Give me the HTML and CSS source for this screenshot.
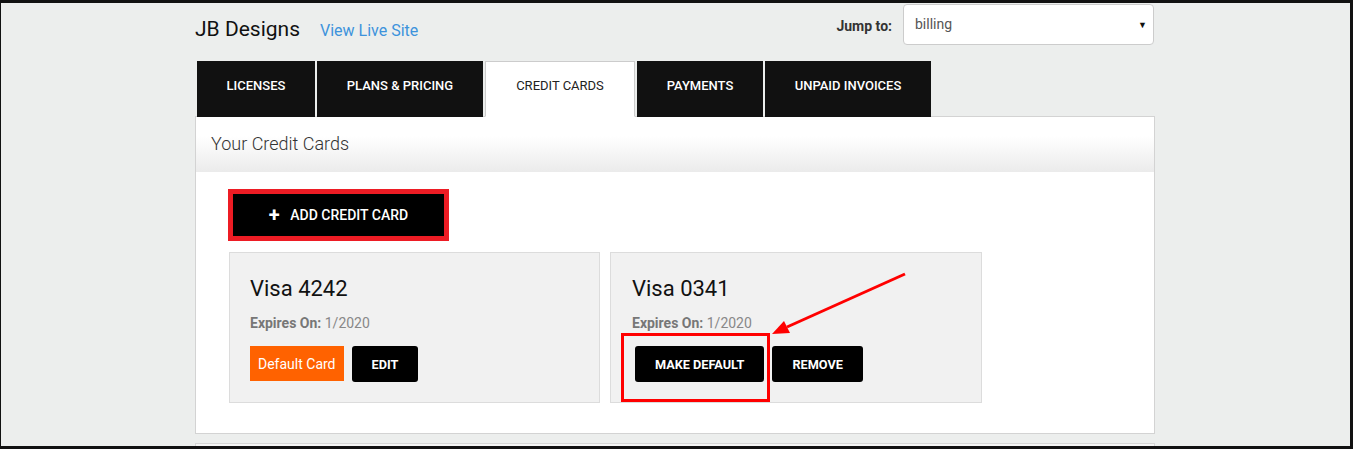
FILE: index.html
```html
<!DOCTYPE html>
<html lang="en">
  <head>
    <meta charset="UTF-8" />
    <meta name="viewport" content="width=device-width, initial-scale=1.0" />
    <title>Billing - Credit Cards</title>
    <link rel="stylesheet" href="styles.css">
  </head>
  <body>
    <div class="container">
      <!-- top bar -->
      <div class="topbar">
        <div class="site">
          <h1>JB Designs</h1>
          <a href="#" class="live-link">View Live Site</a>
        </div>
        <div class="jump">
          <label>Jump to:</label>
          <div class="select">
            <span>billing</span>
            <span class="caret">&#9660;</span>
          </div>
        </div>
      </div>

      <!-- tabs -->
      <div class="tabs">
        <a href="#" class="tab tab-licenses">LICENSES</a>
        <a href="#" class="tab tab-plans">PLANS &amp; PRICING</a>
        <a href="#" class="tab tab-cards active">CREDIT CARDS</a>
        <a href="#" class="tab tab-payments">PAYMENTS</a>
        <a href="#" class="tab tab-invoices">UNPAID INVOICES</a>
      </div>

      <!-- credit cards panel -->
      <div class="panel">
        <div class="panel-header">Your Credit Cards</div>
        <div class="panel-body">
          <div class="highlight">
            <button class="btn-add"><span class="plus">+</span> ADD CREDIT CARD</button>
          </div>

          <div class="cards">
            <div class="card">
              <h2>Visa 4242</h2>
              <p class="expires"><b>Expires On:</b> 1/2020</p>
              <div class="actions">
                <span class="badge-default">Default Card</span>
                <button class="btn">EDIT</button>
              </div>
            </div>

            <div class="card">
              <h2>Visa 0341</h2>
              <p class="expires"><b>Expires On:</b> 1/2020</p>
              <div class="actions shifted">
                <button class="btn">MAKE DEFAULT</button>
                <button class="btn">REMOVE</button>
              </div>
              <!-- annotation box -->
              <div class="mark"></div>
            </div>

            <!-- annotation arrow -->
            <svg class="arrow" width="760" height="160" viewBox="0 0 760 160">
              <line x1="676" y1="22" x2="558" y2="75" stroke="#f00" stroke-width="3" />
              <polygon points="543,82 561,81 555,69" fill="#f00" />
            </svg>
          </div>
        </div>
      </div>

      <div class="panel-next"></div>
    </div>
  </body>
</html>
```

FILE: styles.css
```css
/* reset */
* {
  margin: 0;
  padding: 0;
  box-sizing: border-box;
}

body {
  font-family: Roboto, "Liberation Sans", sans-serif;
  background-color: #eceeed;
  color: #222;
  height: 449px;
  overflow: hidden;
  border-style: solid;
  border-color: #111;
  border-width: 3px 3px 3px 1px;
}

.container {
  width: 960px;
  margin-left: 194px;
}

/* top bar */
.topbar {
  display: flex;
  justify-content: space-between;
  height: 58px;
}

.site {
  display: flex;
  align-items: baseline;
  gap: 20px;
  padding-top: 14px;
}

.site h1 {
  font-size: 21px;
  font-weight: 400;
  line-height: 24px;
  color: #111;
}

.live-link {
  font-size: 16px;
  color: #3d93dc;
  text-decoration: none;
}

.jump {
  display: flex;
  align-items: center;
  gap: 11px;
  height: 41px;
  margin-top: 1px;
  margin-right: 1px;
}

.jump label {
  font-size: 14px;
  font-weight: 700;
  color: #333;
  padding-top: 2px;
}

.select {
  width: 251px;
  height: 41px;
  background: #fff;
  border: 1px solid #ccc;
  border-radius: 4px;
  display: flex;
  justify-content: space-between;
  align-items: center;
  padding: 0 6px 2px 11px;
  font-size: 14px;
  color: #555;
}

.caret {
  font-size: 9px;
  color: #111;
  padding-top: 3px;
}

/* tabs */
.tabs {
  display: flex;
  gap: 2px;
  padding-left: 2px;
  height: 56px;
  margin-bottom: -1px;
  position: relative;
}

.tab {
  display: flex;
  align-items: center;
  justify-content: center;
  padding-bottom: 7px;
  background: #111;
  color: #fff;
  font-size: 13px;
  font-weight: 500;
  text-decoration: none;
}

.tab-licenses { width: 118px; }
.tab-plans { width: 166px; }
.tab-cards { width: 150px; }
.tab-payments { width: 126px; }
.tab-invoices { width: 166px; }

.tab.active {
  background: #fff;
  color: #222;
  font-weight: 400;
  border: 1px solid #ccc;
  border-bottom-color: #fff;
}

/* panel */
.panel {
  background: #fff;
  border: 1px solid #d3d3d3;
  height: 318px;
}

.panel-header {
  height: 55px;
  display: flex;
  align-items: center;
  padding: 0 15px 2px;
  font-size: 18px;
  font-weight: 300;
  color: #333;
  background: linear-gradient(#fff 35%, #ebebeb);
}

.panel-body {
  padding: 17px 33px 0;
}

.highlight {
  display: inline-block;
  margin-left: -1px;
  border: 5px solid #ed1c24;
}

.btn-add {
  display: block;
  width: 211px;
  height: 42px;
  background: #000;
  color: #fff;
  border: none;
  font-family: inherit;
  font-size: 14px;
  font-weight: 500;
}

.btn-add .plus {
  font-size: 20px;
  font-weight: 700;
  margin-right: 7px;
  vertical-align: -2px;
}

/* cards */
.cards {
  position: relative;
  display: flex;
  gap: 10px;
  margin-top: 11px;
}

.card {
  position: relative;
  width: 371px;
  height: 151px;
  background: #f1f1f1;
  border: 1px solid #dcdcdc;
  padding: 24px 20px 0;
}

.card + .card {
  width: 372px;
  padding-left: 21px;
}

.card h2 {
  font-size: 22px;
  font-weight: 400;
  line-height: 24px;
  color: #111;
}

.expires {
  margin-top: 13px;
  font-size: 14px;
  line-height: 19px;
  color: #888;
}

.expires b {
  color: #777;
}

.actions {
  display: flex;
  gap: 8px;
  margin-top: 13px;
}

.actions.shifted {
  margin-left: 3px;
}

.badge-default {
  display: flex;
  align-items: center;
  height: 35px;
  padding: 0 8px;
  background: #ff6200;
  color: #fff;
  font-size: 14px;
}

.btn {
  height: 36px;
  padding: 0 20px;
  background: #000;
  color: #fff;
  border: none;
  border-radius: 3px;
  font-family: inherit;
  font-size: 12.7px;
  font-weight: 700;
}

/* annotations */
.mark {
  position: absolute;
  left: 10px;
  top: 80px;
  width: 149px;
  height: 69px;
  border: 3px solid #f00;
}

.arrow {
  position: absolute;
  left: 0;
  top: 0;
  pointer-events: none;
}

.panel-next {
  margin-top: 9px;
  height: 20px;
  background: #f4f4f4;
  border: 1px solid #d6d6d6;
}
```
